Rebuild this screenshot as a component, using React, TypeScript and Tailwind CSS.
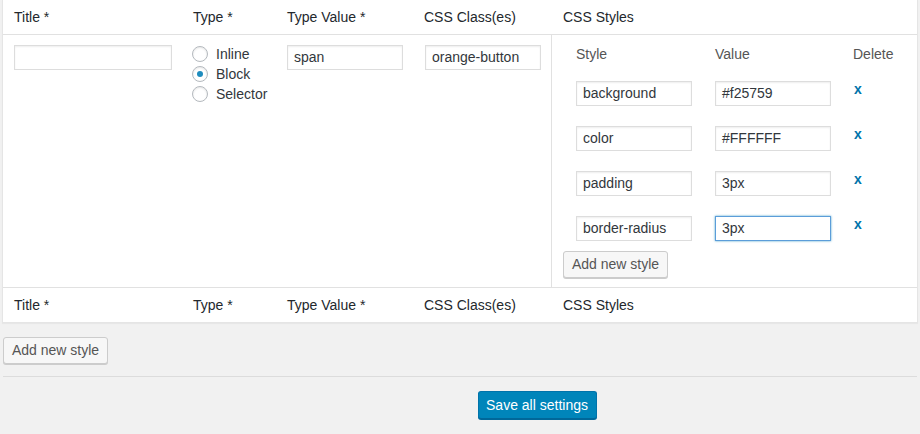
import React from 'react';

const font = { fontFamily: '"Liberation Sans", Arial, sans-serif' };

const Field: React.FC<{ value?: string; className?: string; focused?: boolean }> = ({ value = '', className = '', focused }) => (
    <div
        className={`h-[25px] flex items-center px-[6px] bg-white text-[14px] text-[#32373c] border ${
            focused ? 'border-[#5b9dd9] shadow-[0_0_2px_rgba(30,140,190,0.8)]' : 'border-[#ddd] shadow-[inset_0_1px_2px_rgba(0,0,0,0.07)]'
        } ${className}`}
    >
        {value}
    </div>
);

const Radio: React.FC<{ label: string; checked?: boolean }> = ({ label, checked }) => (
    <div className="flex items-center h-[20px] gap-[8px]">
        <span className="w-[16px] h-[16px] rounded-full border border-[#b4b9be] bg-white shadow-[inset_0_1px_2px_rgba(0,0,0,0.1)] flex items-center justify-center">
            {checked && <span className="w-[6px] h-[6px] rounded-full bg-[#1e8cbe]" />}
        </span>
        <span className="text-[14px] text-[#32373c]">{label}</span>
    </div>
);

const WpButton: React.FC<{ children: React.ReactNode; className?: string }> = ({ children, className = '' }) => (
    <button className={`h-[27px] px-[8px] text-[14px] text-[#555] bg-[#f7f7f7] border border-[#ccc] rounded-[3px] shadow-[0_1px_0_#ccc] ${className}`}>
        {children}
    </button>
);

const HeadRow: React.FC<{ top?: boolean }> = ({ top }) => (
    <div className={`flex h-[35px] items-center text-[14px] text-[#23282d] ${top ? 'border-b border-[#e1e1e1] pt-[1px]' : 'border-t border-[#e1e1e1]'}`}>
        <div className="w-[179px] pl-[11px]">Title *</div>
        <div className="w-[94px] pl-[11px]">Type *</div>
        <div className="w-[137px] pl-[11px]">Type Value *</div>
        <div className="w-[139px] pl-[11px]">CSS Class(es)</div>
        <div className="flex-1 pl-[11px]">CSS Styles</div>
    </div>
);

const styles = [
    { k: 'background', v: '#f25759' },
    { k: 'color', v: '#FFFFFF' },
    { k: 'padding', v: '3px' },
    { k: 'border-radius', v: '3px', focus: true },
];

export default function App() {
    return (
        <div className="w-[920px] h-[434px] bg-[#f1f1f1] overflow-hidden" style={font}>
            <div className="ml-[2px] mr-[2px] bg-white border-x border-b border-[#e5e5e5] shadow-[0_1px_1px_rgba(0,0,0,0.04)]">
                <HeadRow top />
                <div className="flex h-[252px]">
                    <div className="w-[179px] pl-[11px] pt-[10px]">
                        <Field className="w-[158px]" />
                    </div>
                    <div className="w-[94px] pl-[10px] pt-[9px]">
                        <Radio label="Inline" />
                        <Radio label="Block" checked />
                        <Radio label="Selector" />
                    </div>
                    <div className="w-[137px] pl-[11px] pt-[10px]">
                        <Field value="span" className="w-[116px]" />
                    </div>
                    <div className="w-[139px] pl-[12px] pt-[10px] border-r border-[#e1e1e1]">
                        <Field value="orange-button" className="w-[116px]" />
                    </div>
                    <div className="flex-1 pl-[11px]">
                        <div className="pl-[13px] pt-[11px] grid grid-cols-[139px_138px_1fr] text-[14px] leading-[16px] text-[#555]">
                            <div>Style</div>
                            <div>Value</div>
                            <div>Delete</div>
                        </div>
                        <div className="pl-[13px] pt-[19px] flex flex-col gap-[20px]">
                            {styles.map((s) => (
                                <div key={s.k} className="grid grid-cols-[139px_138px_1fr] items-start">
                                    <Field value={s.k} className="w-[116px]" />
                                    <Field value={s.v} className="w-[116px]" focused={s.focus} />
                                    <div className="pl-[1px] -mt-[2px] text-[14px] font-bold text-[#0073aa]">x</div>
                                </div>
                            ))}
                        </div>
                        <WpButton className="mt-[10px]">Add new style</WpButton>
                    </div>
                </div>
                <HeadRow />
            </div>
            <div className="pl-[3px] pt-[14px]">
                <WpButton>Add new style</WpButton>
            </div>
            <div className="ml-[3px] mr-[3px] mt-[12px] border-t border-[#dcdcdc]" />
            <div className="flex justify-center pt-[14px] pl-[154px]">
                <button className="h-[28px] w-[119px] text-[14px] text-white bg-[#0085ba] border border-[#0073aa] border-b-[#006799] rounded-[3px] shadow-[0_1px_0_#006799]">
                    Save all settings
                </button>
            </div>
        </div>
    );
}
